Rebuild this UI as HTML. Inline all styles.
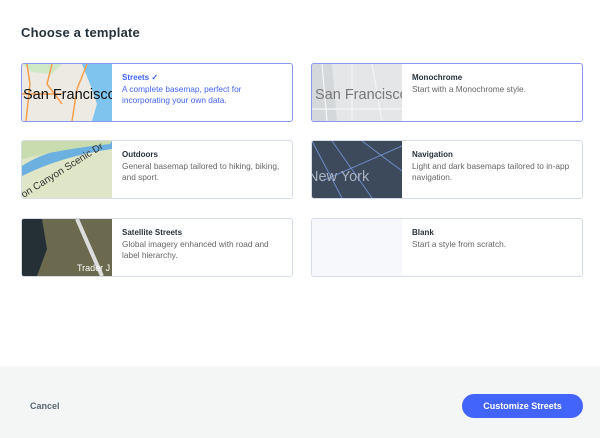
<!DOCTYPE html>
<html><head><meta charset="utf-8"><style>
*{box-sizing:border-box;margin:0;padding:0}
body{width:600px;height:438px;background:#fff;font-family:"Liberation Sans",sans-serif;position:relative;overflow:hidden;color:#333}
h1{position:absolute;left:21px;top:25px;font-size:13px;font-weight:bold;color:#27323a;letter-spacing:.2px}
.card{position:absolute;width:272px;height:59px;border:1px solid #d6dde8;border-radius:3px;overflow:hidden;background:#fff}
.card.sel{border-color:#8a98f4}
.img{position:absolute;left:0;top:0;width:90px;height:57px;overflow:hidden}
.txt{position:absolute;left:100px;top:8px;width:160px;font-size:8.3px;line-height:11.5px;color:#666}
.txt b{display:block;color:#27323a;font-size:8px}
.sel .txt,.sel .txt b{color:#4264fb}
.card.sel.mono .txt{color:#666}.card.sel.mono .txt b{color:#27323a}
.foot{position:absolute;left:0;top:366px;width:600px;height:72px;background:#f4f5f5}
.cancel{position:absolute;left:30px;top:401px;font-size:9px;font-weight:bold;color:#5a6670}
.btn{position:absolute;left:462px;top:394px;width:121px;height:24px;border-radius:12px;background:#4264fb;color:#fff;font-size:9px;font-weight:bold;text-align:center;line-height:24px}
</style></head><body>
<h1>Choose a template</h1>

<div class="card sel" style="left:21px;top:63px">
<div class="img"><svg width="90" height="57"><rect width="90" height="57" fill="#eceae2"/><path d="M60 0H90V57H70L75 40L68 20Z" fill="#7fc4ef"/><path d="M0 0H40L30 10L10 8Z" fill="#cfe8c5"/><path d="M5 0L8 20L4 57M30 0L25 20L40 40M65 0L55 25L50 57M0 30H40" stroke="#f49e4c" stroke-width="1.5" fill="none"/><text x="1" y="35" font-size="14.5" font-family="Liberation Sans" fill="#111">San Francisco</text></svg></div>
<div class="txt"><b>Streets ✓</b>A complete basemap, perfect for incorporating your own data.</div></div>

<div class="card sel mono" style="left:311px;top:63px">
<div class="img"><svg width="90" height="57"><rect width="90" height="57" fill="#d5d8da"/><path d="M20 0L25 57H90V0Z" fill="#e4e6e7"/><path d="M10 0L15 57M40 0V57M60 0L70 57M0 45H90" stroke="#f5f5f5" stroke-width="1.2"/><text x="3" y="35" font-size="14.5" font-family="Liberation Sans" fill="#777">San Francisco</text></svg></div>
<div class="txt"><b>Monochrome</b>Start with a Monochrome style.</div></div>

<div class="card" style="left:21px;top:140px">
<div class="img"><svg width="90" height="57"><rect width="90" height="57" fill="#dfe6c8"/><path d="M0 25Q30 5 90 0V8Q40 15 0 35Z" fill="#6bb0de"/><path d="M0 0H90L88 3Q40 8 0 18Z" fill="#c8dcb0"/><text x="2" y="58" font-size="10" font-family="Liberation Sans" fill="#333" transform="rotate(-32 0 58)">on Canyon Scenic Dr</text></svg></div>
<div class="txt"><b>Outdoors</b>General basemap tailored to hiking, biking, and sport.</div></div>

<div class="card" style="left:311px;top:140px">
<div class="img"><svg width="90" height="57"><rect width="90" height="57" fill="#3c4a5c"/><path d="M0 0L30 57M20 0L60 57M90 5L10 40M50 0L90 30" stroke="#6d8bc6" stroke-width="1"/><text x="-4" y="40" font-size="14.5" font-family="Liberation Sans" fill="#aab3bf">New York</text></svg></div>
<div class="txt"><b>Navigation</b>Light and dark basemaps tailored to in-app navigation.</div></div>

<div class="card" style="left:21px;top:218px">
<div class="img"><svg width="90" height="57"><rect width="90" height="57" fill="#6b6a4e"/><path d="M0 0H20L25 30L15 57H0Z" fill="#243036"/><path d="M55 0L80 57" stroke="#ddd" stroke-width="4"/><text x="55" y="52" font-size="9" font-family="Liberation Sans" fill="#fff">Trader J</text></svg></div>
<div class="txt"><b>Satellite Streets</b>Global imagery enhanced with road and label hierarchy.</div></div>

<div class="card" style="left:311px;top:218px">
<div class="img" style="background:#f7f8fc"></div>
<div class="txt"><b>Blank</b>Start a style from scratch.</div></div>

<div class="foot"></div>
<div class="cancel">Cancel</div>
<div class="btn">Customize Streets</div>
</body></html>
